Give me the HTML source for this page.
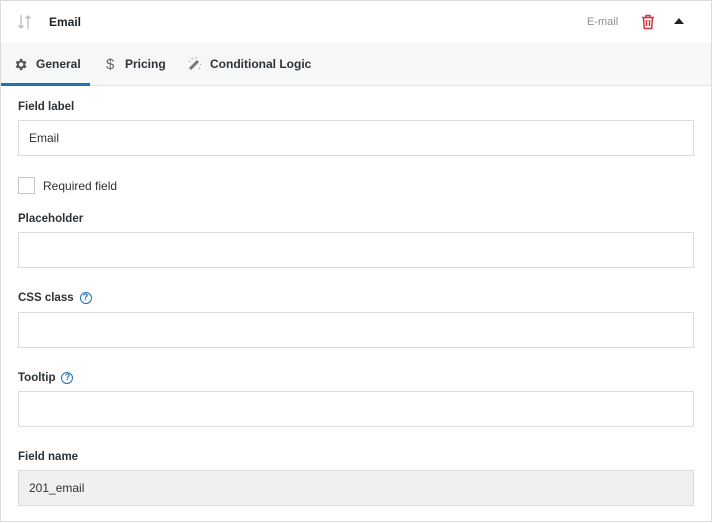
<!DOCTYPE html>
<html><head><meta charset="utf-8"><style>
*{box-sizing:border-box;margin:0;padding:0}
body{width:712px;height:523px;background:#fff;font-family:"Liberation Sans",sans-serif;color:#1d2327;position:relative;overflow:hidden}
.wrap{position:absolute;left:0;top:0;width:712px;height:522px;border:1px solid #dcdcde}
.abs{position:absolute}
.lbl{position:absolute;left:18px;font-size:11.5px;font-weight:bold;color:#2c3338;line-height:14px}
.inp{position:absolute;left:18px;width:676px;height:36px;border:1px solid #dcdcde;background:#fff;font-size:12px;padding-left:10px;line-height:34px;color:#2c3338}
.tabs{position:absolute;left:1px;top:43px;width:710px;height:43px;background:#f6f7f7;border-bottom:1px solid #e4e4e4}
.tab{position:absolute;top:0;height:43px;line-height:43px;font-size:12px;font-weight:bold;color:#2c3338}
.q{display:inline-block;width:12px;height:12px;border:1.5px solid #2271b1;border-radius:50%;color:#2271b1;font-size:9px;line-height:9px;text-align:center;font-weight:bold;vertical-align:1px;margin-left:6px}
</style></head><body>
<div class="wrap"></div>
<svg class="abs" style="left:17px;top:14px" width="16" height="16" viewBox="0 0 16 16" fill="none" stroke="#bbb" stroke-width="1.3"><path d="M4 1v13M1.5 11.5L4 14l2.5-2.5M11 15V2M8.5 4.5L11 2l2.5 2.5"/></svg>
<div class="abs" style="left:49px;top:15px;font-size:12px;font-weight:bold;line-height:14px">Email</div>
<div class="abs" style="left:587px;top:16px;font-size:11px;color:#8c8f94;line-height:13px">E-mail</div>
<svg class="abs" style="left:641px;top:14px" width="14" height="16" viewBox="0 0 14 16" fill="none" stroke="#d63638" stroke-width="1.5"><path d="M1 3.5h12M5 3.5V1.5h4v2M2.5 3.5l.8 11h7.4l.8-11M5.5 6v6M8.5 6v6"/></svg>
<svg class="abs" style="left:674px;top:18px" width="10" height="6" viewBox="0 0 10 6"><path d="M0 6L5 0L10 6Z" fill="#1d2327"/></svg>
<div class="tabs">
<svg class="abs" style="left:12px;top:14px" width="15" height="15" viewBox="0 0 24 24"><path fill="#555" d="M19.4 13a7.5 7.5 0 000-2l2.1-1.6-2-3.5-2.5 1a7.6 7.6 0 00-1.7-1L15 3h-4l-.4 2.9a7.6 7.6 0 00-1.7 1l-2.5-1-2 3.5L6.5 11a7.5 7.5 0 000 2l-2.1 1.6 2 3.5 2.5-1a7.6 7.6 0 001.7 1L11 21h4l.4-2.9a7.6 7.6 0 001.7-1l2.5 1 2-3.5zM13 15.5A3.5 3.5 0 1113 8.5a3.5 3.5 0 010 7z"/></svg>
<div class="tab" style="left:35px">General</div>
<div class="abs" style="left:0;top:40px;width:89px;height:3px;background:#2271b1"></div>
<div class="tab" style="left:105px;color:#666;font-size:15px;font-weight:normal">$</div>
<div class="tab" style="left:124px">Pricing</div>
<svg class="abs" style="left:186px;top:13px" width="16" height="16" viewBox="0 0 16 16"><path d="M3 13L11 5" stroke="#777" stroke-width="3"/><path d="M5 2l.5 1M2 5l1 .5M9 1v1.5M13 8l1 .5M12 12l1 1" stroke="#999" stroke-width="1"/></svg>
<div class="tab" style="left:209px">Conditional Logic</div>
</div>
<div class="lbl" style="top:100px">Field label</div>
<div class="inp" style="top:120px">Email</div>
<div class="abs" style="left:18px;top:177px;width:17px;height:17px;border:1px solid #c3c4c7"></div>
<div class="abs" style="left:43px;top:179px;font-size:12px;line-height:14px;color:#2c3338">Required field</div>
<div class="lbl" style="top:212px">Placeholder</div>
<div class="inp" style="top:232px"></div>
<div class="lbl" style="top:291px">CSS class<span class="q">?</span></div>
<div class="inp" style="top:312px"></div>
<div class="lbl" style="top:371px">Tooltip<span class="q">?</span></div>
<div class="inp" style="top:391px"></div>
<div class="lbl" style="top:450px">Field name</div>
<div class="inp" style="top:470px;background:#f0f0f1">201_email</div>
</body></html>
